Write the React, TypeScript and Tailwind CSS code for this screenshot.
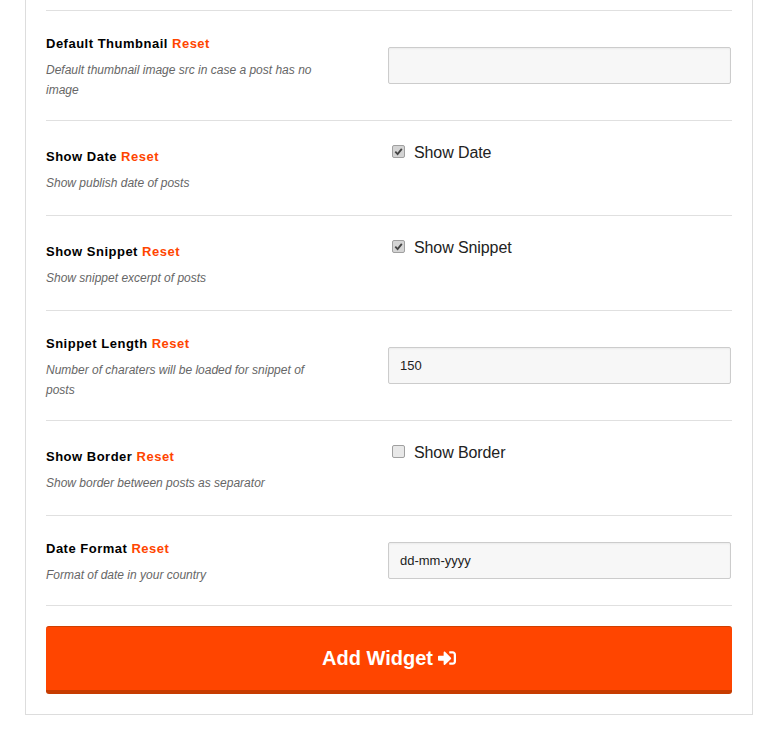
import { FaSignInAlt } from "react-icons/fa";

function Check({ checked }: { checked: boolean }) {
  return (
    <span className={`relative mt-[2px] flex h-[13px] w-[13px] shrink-0 items-center justify-center rounded-[2px] border border-[#a0a0a0] ${checked ? "bg-[#d4d4d4]" : "bg-[#e8e8e8]"}`}>
      {checked && (
        <svg viewBox="0 0 12 12" className="h-[11px] w-[11px]">
          <path d="M2.5 6.2 L5 8.8 L9.6 3.2" fill="none" stroke="#444" strokeWidth="2" />
        </svg>
      )}
    </span>
  );
}

function Row({ title, desc, top, children, right, h }: { title: string; desc: string; top: string; right: string; h: string; children: React.ReactNode }) {
  return (
    <div className={`flex border-b border-[#e0e0e0] ${h}`}>
      <div className={`w-[342px] shrink-0 ${top}`}>
        <div className="text-[13px] font-bold leading-5 tracking-[0.5px] text-black">
          {title} <span className="text-[#ff4500]">Reset</span>
        </div>
        <p className="mt-[6px] w-[275px] text-[12px] italic leading-5 text-[#666]">{desc}</p>
      </div>
      <div className={`flex-1 ${right}`}>{children}</div>
    </div>
  );
}

function TextBox({ value }: { value: string }) {
  return (
    <div className="mr-px h-[37px] rounded-[2px] border border-[#ccc] bg-[#f7f7f7] px-[11px] text-[13px] leading-[35px] text-[#222] shadow-[inset_0_1px_2px_rgba(0,0,0,0.05)]">
      {value}
    </div>
  );
}

function CheckRow({ checked, label }: { checked: boolean; label: string }) {
  return (
    <label className="flex items-start gap-[9px] pl-[4px] text-[16px] leading-5 text-[#222]">
      <Check checked={checked} />
      <span className="tracking-[-0.1px]">{label}</span>
    </label>
  );
}

export default function App() {
  return (
    <div className="h-[737px] overflow-hidden bg-white pl-[25px] pr-[4px] font-['Liberation_Sans',Arial,sans-serif]">
      <div className="h-[715px] border-x border-b border-[#ddd] px-5">
        <div className="h-[11px] border-b border-[#e0e0e0]" />
        <Row title="Default Thumbnail" desc="Default thumbnail image src in case a post has no image" top="pt-[23px]" right="pt-[36px]" h="h-[110px]">
          <TextBox value="" />
        </Row>
        <Row title="Show Date" desc="Show publish date of posts" top="pt-[26px]" right="pt-[22px]" h="h-[95px]">
          <CheckRow checked label="Show Date" />
        </Row>
        <Row title="Show Snippet" desc="Show snippet excerpt of posts" top="pt-[26px]" right="pt-[22px]" h="h-[95px]">
          <CheckRow checked label="Show Snippet" />
        </Row>
        <Row title="Snippet Length" desc="Number of charaters will be loaded for snippet of posts" top="pt-[23px]" right="pt-[36px]" h="h-[110px]">
          <TextBox value="150" />
        </Row>
        <Row title="Show Border" desc="Show border between posts as separator" top="pt-[26px]" right="pt-[22px]" h="h-[95px]">
          <CheckRow checked={false} label="Show Border" />
        </Row>
        <Row title="Date Format" desc="Format of date in your country" top="pt-[23px]" right="pt-[26px]" h="h-[90px]">
          <TextBox value="dd-mm-yyyy" />
        </Row>
        <button className="mt-5 flex h-[68px] w-full items-center justify-center gap-[5px] rounded-[3px] border-t border-b-[4px] border-t-[#cf3f00] border-b-[#c73c00] bg-[#ff4500] pb-[2px] text-[20px] font-bold text-white">
          Add Widget <FaSignInAlt className="h-[18px] w-[18px]" />
        </button>
      </div>
    </div>
  );
}
